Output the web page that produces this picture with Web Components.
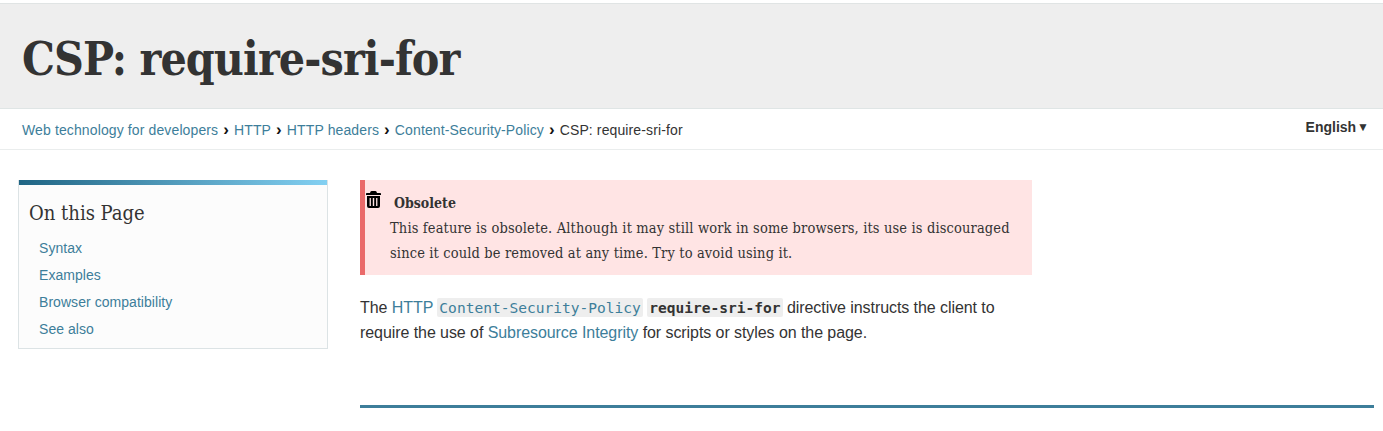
<!DOCTYPE html>
<html lang="en"><head><meta charset="utf-8"><title>CSP: require-sri-for</title>
<style>
html,body{margin:0;padding:0;background:#fff}
body{font:14px/20px "Liberation Sans",Arial,sans-serif;color:#333;height:431px;overflow:hidden}
</style></head><body>
<mdn-title>CSP: require-sri-for</mdn-title>
<mdn-crumbs>
<mdn-link>Web technology for developers</mdn-link><mdn-link>HTTP</mdn-link><mdn-link>HTTP headers</mdn-link><mdn-link>Content-Security-Policy</mdn-link><span>CSP: require-sri-for</span>
</mdn-crumbs>
<mdn-layout>
<mdn-toc slot="side" heading="On this Page">
<mdn-link>Syntax</mdn-link><mdn-link>Examples</mdn-link><mdn-link>Browser compatibility</mdn-link><mdn-link>See also</mdn-link>
</mdn-toc>
<mdn-notice heading="Obsolete">This feature is obsolete. Although it may still work in some browsers, its use is discouraged since it could be removed at any time. Try to avoid using it.</mdn-notice>
<mdn-para>The <mdn-link>HTTP</mdn-link> <mdn-code><mdn-link>Content-Security-Policy</mdn-link></mdn-code> <mdn-code strong>require-sri-for</mdn-code> directive instructs the client to require the use of <mdn-link>Subresource Integrity</mdn-link> for scripts or styles on the page.</mdn-para>
<mdn-rule></mdn-rule>
</mdn-layout>
<script>
function def(name,html,init){
  customElements.define(name,class extends HTMLElement{
    constructor(){super();this.attachShadow({mode:'open'}).innerHTML=html;}
    connectedCallback(){if(init)init(this);}
  });
}
def('mdn-link',`<style>:host{display:inline;color:#3d7e9a}</style><slot></slot>`);
def('mdn-title',`<style>
:host{display:block;margin-top:3px;border-top:1px solid #e0e4e4;border-bottom:1px solid #dfe5e5;background:#eee;height:104px;box-sizing:content-box;padding:0 22px}
h1{margin:0;font:700 46px/110px "DejaVu Serif Condensed","DejaVu Serif",serif;letter-spacing:-.9px;color:#333;height:104px}
</style><h1><slot></slot></h1>`);
def('mdn-crumbs',`<style>
:host{display:flex;height:40px;border-bottom:1px solid #eaeded;padding:0 14px 0 22px;align-items:center;justify-content:space-between;font-size:14px;color:#333;box-sizing:content-box;letter-spacing:.12px}
.list{display:flex;align-items:center;margin-top:1px}
.lang{font-weight:700;color:#333;letter-spacing:0;margin-top:-4px;font-size:14px}
.lang i{font-style:normal;font-size:12px;margin-left:1px;vertical-align:1px}
</style><div class="list" id="l"><slot></slot></div><div class="lang">English<i>▼</i></div>`,
el=>{
  [...el.querySelectorAll('mdn-link')].forEach(a=>{
    if(a.nextElementSibling&&a.nextElementSibling.tagName!=='B'){
      const b=document.createElement('b');b.textContent='›';
      b.style.cssText='margin:0 5px;color:#111;font-size:17px;line-height:14px';
      a.after(b);
    }
  });
});
def('mdn-layout',`<style>
:host{display:grid;grid-template-columns:310px 1014px;column-gap:32px;padding:30px 9px 0 18px;align-items:start}
.side{grid-row:1 / span 3}
.main{display:flex;flex-direction:column;min-width:0}
</style><div class="side"><slot name="side"></slot></div><div class="main"><slot></slot></div>`);
def('mdn-toc',`<style>
:host{display:block;box-sizing:border-box;height:169px;background:#fcfcfc;border:1px solid #dce3e5;border-top:0;position:relative;padding:20px 10px 0 10px}
.bar{height:5px;margin:-20px -10px 15px -10px;background:linear-gradient(to right,#206584,#83d0f2)}
h2{margin:0 0 8px;font:400 20px/27px "DejaVu Serif Condensed","DejaVu Serif",serif;color:#333}
ul{margin:0;padding:0 0 0 10px;display:flex;flex-direction:column}
::slotted(mdn-link){display:block;height:27px;line-height:27px;font-size:14px;letter-spacing:.05px}
</style><div class="bar"></div><h2></h2><ul><slot></slot></ul>`,
el=>{el.shadowRoot.querySelector('h2').textContent=el.getAttribute('heading')});
def('mdn-notice',`<style>
:host{display:block;box-sizing:border-box;width:672px;height:95px;background:#ffe4e4;border-left:5px solid #ea6a6a;position:relative;padding:11px 16px 0 25px;font:400 14.5px/25px "DejaVu Serif Condensed","DejaVu Serif",serif;letter-spacing:.14px;color:#333}
svg{position:absolute;left:1px;top:11px}
h4{margin:0 0 0 4px;font:700 14px/25px "DejaVu Serif Condensed","DejaVu Serif",serif;letter-spacing:0}
</style><svg width="15" height="17" viewBox="0 0 15 17"><path fill="#000" fill-rule="evenodd" d="M4.6.6Q4.9 0 5.6 0h3.8q.7 0 1 .6L11 2h3.2q.8 0 .8.8V4H0V2.800q0-.8.8-.8H4zM1 5h13v10a2 2 0 0 1-2 2H3a2 2 0 0 1-2-2zm2.600 2v8h1.300V7zm3.200 0v8h1.400V7zm3.300 0v8h1.300V7z"/></svg><h4></h4><slot></slot>`,
el=>{el.shadowRoot.querySelector('h4').textContent=el.getAttribute('heading')});
def('mdn-para',`<style>:host{display:block;width:672px;margin-top:20px;font-size:16px;line-height:25px;color:#333;letter-spacing:-.07px}</style><slot></slot>`);
def('mdn-code',`<style>:host{display:inline;font:14.55px "DejaVu Sans Mono","Liberation Mono",monospace;letter-spacing:0;background:#eee;border-radius:2px;padding:1px 2px}
:host([strong]){font-weight:700}</style><slot></slot>`);
def('mdn-rule',`<style>:host{display:block;height:3px;background:#3d7e9a;margin-top:60px}</style>`);
</script>
</body></html>
